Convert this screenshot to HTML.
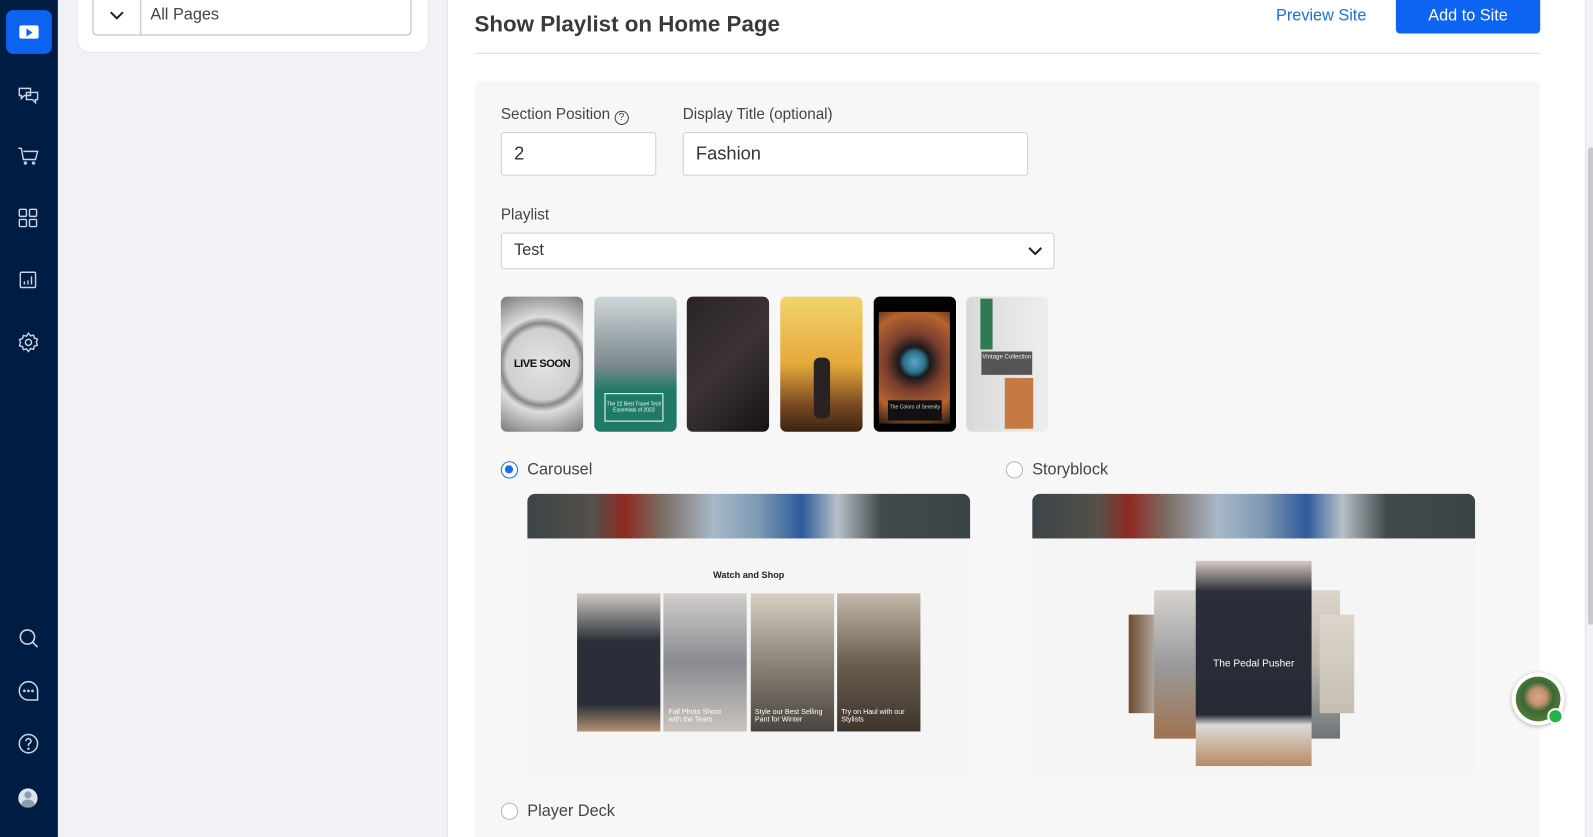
<!DOCTYPE html>
<html><head><meta charset="utf-8"><style>
*{box-sizing:border-box;margin:0;padding:0}
html,body{width:1593px;height:837px;overflow:hidden;background:#f0f2f5}
#w{position:absolute;left:0;top:0;width:1568px;height:824px;transform:scale(1.01594);transform-origin:0 0;font-family:"Liberation Sans",sans-serif;color:#333;overflow:hidden}
.side{position:absolute;left:0;top:0;width:57px;height:824px;background:#011c43}
.ic{position:absolute;left:17px;width:22px;height:22px}
.left{position:absolute;left:57px;top:0;width:384px;height:824px;background:#f0f2f5;border-right:1px solid #e3e5e8}
.card{position:absolute;left:76px;top:-10px;width:346px;height:62px;background:#fff;border-radius:12px;border:1px solid #e6e8eb}
.sel{position:absolute;left:91px;top:-5px;width:314px;height:40px;border:1px solid #b8b8b8;border-radius:0 0 4px 4px;background:#fff}
.main{position:absolute;left:441px;top:0;width:1119px;height:824px;background:#fff}
.scroll{position:absolute;left:1560px;top:0;width:8px;height:824px;background:#f0f2f5;border-left:1px solid #e5e5e5}
.abs{position:absolute}
.inp{position:absolute;background:#fff;border:1px solid #cfcfcf;border-radius:3px;font-size:18px;color:#333;padding-left:12px;display:flex;align-items:center}
.lbl{position:absolute;font-size:15px;color:#444}
.th{position:absolute;top:292px;width:81px;height:133px;border-radius:6px;overflow:hidden}
.radio{position:absolute;width:17px;height:17px;border-radius:50%;border:1px solid #b5b5b5;background:#fff}
</style></head><body><div id="w">
<div class="side">
<div class="abs" style="left:6px;top:10px;width:45px;height:43px;background:#0b63f0;border-radius:7px"></div>
<div class="abs" style="left:19px;top:25px;width:19px;height:13px;background:#fff;border-radius:2px"></div>
<div class="abs" style="left:26px;top:28px;width:0;height:0;border-left:6px solid #0b63f0;border-top:4px solid transparent;border-bottom:4px solid transparent"></div>
<svg class="ic" style="top:82px" viewBox="0 0 22 22" fill="none" stroke="#c9d3e3" stroke-width="1.4"><path d="M2 5h11v7H7l-3 3v-3H2z"/><path d="M9 9h11v7h-2v3l-3-3H9z"/></svg>
<svg class="ic" style="top:143px" viewBox="0 0 22 22" fill="none" stroke="#c9d3e3" stroke-width="1.4"><path d="M1 3h3l2 11h12l2-8H6"/><circle cx="8" cy="17.5" r="1"/><circle cx="16" cy="17.5" r="1"/></svg>
<svg class="ic" style="top:204px" viewBox="0 0 22 22" fill="none" stroke="#c9d3e3" stroke-width="1.4"><rect x="2" y="2" width="7" height="7" rx="1"/><rect x="12" y="2" width="7" height="7" rx="1"/><rect x="2" y="12" width="7" height="7" rx="1"/><rect x="12" y="12" width="7" height="7" rx="1"/></svg>
<svg class="ic" style="top:265px" viewBox="0 0 22 22" fill="none" stroke="#c9d3e3" stroke-width="1.4"><rect x="3" y="3" width="15" height="15" rx="1"/><path d="M7 15v-3M10.5 15v-4M14 15V7"/></svg>
<svg class="ic" style="top:326px" viewBox="0 0 22 22" fill="none" stroke="#c9d3e3" stroke-width="1.4"><circle cx="11" cy="11" r="3"/><path d="M11 2l2 2.5 3-.7.8 3 3 1-1 3 1 3-3 1-.8 3-3-.7L11 20l-2-2.5-3 .7-.8-3-3-1 1-3-1-3 3-1 .8-3 3 .7z"/></svg>
<svg class="ic" style="top:617px" viewBox="0 0 22 22" fill="none" stroke="#c9d3e3" stroke-width="1.6"><circle cx="10" cy="10" r="7"/><path d="M15 15l5 5"/></svg>
<svg class="ic" style="top:669px" viewBox="0 0 22 22" fill="none" stroke="#c9d3e3" stroke-width="1.5"><path d="M11 2a9 9 0 1 0 0 18h9v-9a9 9 0 0 0-9-9z"/><circle cx="7" cy="11" r=".6"/><circle cx="11" cy="11" r=".6"/><circle cx="15" cy="11" r=".6"/></svg>
<svg class="ic" style="top:721px" viewBox="0 0 22 22" fill="none" stroke="#c9d3e3" stroke-width="1.5"><circle cx="11" cy="11" r="9"/><path d="M8.5 8.5a2.5 2.5 0 1 1 3.5 2.3c-.7.3-1 .8-1 1.5v1"/><circle cx="11" cy="16" r=".5"/></svg>
<div class="abs" style="left:18px;top:776px;width:19px;height:19px;border-radius:50%;background:#dde3ec;overflow:hidden"><div class="abs" style="left:6px;top:3px;width:7px;height:7px;border-radius:50%;background:#8d9bb0"></div><div class="abs" style="left:3px;top:11px;width:13px;height:10px;border-radius:50%;background:#8d9bb0"></div></div>
</div>
<div class="left"></div>
<div class="card"></div>
<div class="sel"><div class="abs" style="left:46px;top:0;width:1px;height:39px;background:#b8b8b8"></div>
<svg class="abs" style="left:15px;top:13px" width="16" height="12" viewBox="0 0 16 12" fill="none" stroke="#222" stroke-width="2"><path d="M2 3l6 6 6-6"/></svg>
<div class="abs" style="left:56px;top:10px;font-size:16px;color:#444">All Pages</div></div>
<div class="main"></div>
<div class="scroll"><div class="abs" style="left:2px;top:145px;width:6px;height:470px;border-radius:3px;background:#c8cacd"></div></div>
<div class="abs" style="left:467px;top:11px;font-size:22px;font-weight:bold;color:#3a3a3a">Show Playlist on Home Page</div>
<div class="abs" style="left:1256px;top:7px;font-size:16px;color:#1a6ef0">Preview Site</div>
<div class="abs" style="left:1374px;top:-5px;width:142px;height:38px;background:#0d63f2;border-radius:4px;color:#fff;font-size:16px;text-align:center;line-height:42px">Add to Site</div>
<div class="abs" style="left:467px;top:52px;width:1049px;height:1px;background:#dcdcdc"></div>
<div class="abs" style="left:467px;top:80px;width:1049px;height:770px;background:#f7f7f7;border-radius:6px"></div>
<div class="lbl" style="left:493px;top:104px">Section Position <span style="display:inline-block;width:14px;height:14px;border:1.3px solid #444;border-radius:50%;font-size:10px;text-align:center;line-height:12px;vertical-align:-1px">?</span></div>
<div class="lbl" style="left:672px;top:104px">Display Title (optional)</div>
<div class="inp" style="left:493px;top:130px;width:153px;height:43px">2</div>
<div class="inp" style="left:672px;top:130px;width:340px;height:43px">Fashion</div>
<div class="lbl" style="left:493px;top:203px">Playlist</div>
<div class="inp" style="left:493px;top:229px;width:545px;height:36px;font-size:16px">Test
<svg class="abs" style="right:10px;top:11px" width="16" height="12" viewBox="0 0 16 12" fill="none" stroke="#222" stroke-width="2"><path d="M2 3l6 6 6-6"/></svg></div>
<div class="th" style="left:493px;background:radial-gradient(circle at 50% 50%,#e4e4e4 0,#cfcfcf 45%,#888 52%,#ddd 60%,#777 100%)"><div class="abs" style="left:0;width:81px;top:60px;text-align:center;font-size:11px;font-weight:bold;color:#111;letter-spacing:-.5px">LIVE SOON</div></div>
<div class="th" style="left:585px;background:linear-gradient(#cfd6d8,#7d8a90 50%,#1f7a66 70%,#1f7a66)"><div class="abs" style="left:10px;top:95px;width:58px;height:28px;background:#1f7a66;border:1px solid #fff;color:#fff;font-size:5px;text-align:center;padding-top:7px">The 22 Best Travel Tech Essentials of 2023</div></div>
<div class="th" style="left:676px;background:linear-gradient(135deg,#2a2424,#3c3434 50%,#151212)"></div>
<div class="th" style="left:768px;background:linear-gradient(#f1d36d,#e5a83a 50%,#7a4a22 80%,#3a2410)"><div class="abs" style="left:33px;top:60px;width:16px;height:60px;background:#2a2222;border-radius:6px"></div></div>
<div class="th" style="left:860px;background:#000"><div class="abs" style="left:5px;top:15px;width:70px;height:110px;background:radial-gradient(circle at 50% 45%,#5aa9c8 0,#2d6f8a 15%,#1a1a1a 22%,#7a3e2e 40%,#b5642e 70%,#2a1a14)"></div><div class="abs" style="left:14px;top:102px;width:53px;height:20px;background:#111;color:#ddd;font-size:5px;text-align:center;padding-top:4px">The Colors of Serenity</div></div>
<div class="th" style="left:951px;background:linear-gradient(90deg,#d9d9d9,#eee)"><div class="abs" style="left:14px;top:2px;width:12px;height:50px;background:#2f7a55"></div><div class="abs" style="left:15px;top:54px;width:50px;height:23px;background:#555;color:#eee;font-size:6px;text-align:center;padding-top:3px">Vintage Collection</div><div class="abs" style="left:38px;top:80px;width:28px;height:50px;background:#c47a42"></div></div>
<div class="radio" style="left:493px;top:454px;border:1.5px solid #1a6ef0"><div class="abs" style="left:3px;top:3px;width:8px;height:8px;border-radius:50%;background:#1a6ef0"></div></div>
<div class="abs" style="left:519px;top:454px;font-size:16px;color:#444">Carousel</div>
<div class="radio" style="left:990px;top:454px"></div>
<div class="abs" style="left:1016px;top:454px;font-size:16px;color:#444">Storyblock</div>
<div class="radio" style="left:493px;top:790px"></div>
<div class="abs" style="left:519px;top:790px;font-size:16px;color:#444">Player Deck</div>
<div class="abs" style="left:519px;top:486px;width:436px;height:282px;background:#f5f5f5;border-radius:8px;overflow:hidden">
<div class="abs" style="left:0;top:0;width:436px;height:44px;background:linear-gradient(90deg,#3b4447 0,#55504a 15%,#8e2a22 22%,#7a6a60 30%,#a7b8c8 42%,#7f9ab3 52%,#2d5a9a 62%,#b8c0c8 70%,#404a4a 80%,#3a4445)"></div>
<div class="abs" style="left:0;top:75px;width:436px;text-align:center;font-size:9px;font-weight:bold;color:#222">Watch and Shop</div>
<div class="abs" style="left:49px;top:98px;width:82px;height:136px;background:linear-gradient(#cfc9c2,#2a2e38 35%,#2a2e38 80%,#b49070)"></div>
<div class="abs" style="left:134px;top:98px;width:82px;height:136px;background:linear-gradient(#d2cfcc,#888a90 50%,#c9c4bf)"></div>
<div class="abs" style="left:220px;top:98px;width:82px;height:136px;background:linear-gradient(#d9d0c2,#8c8478 50%,#4a4440)"></div>
<div class="abs" style="left:305px;top:98px;width:82px;height:136px;background:linear-gradient(#c4b9aa,#6b5f50 50%,#3d342c)"></div>
<div class="abs" style="left:139px;top:212px;font-size:7px;color:#fff">Fall Photo Shoot<br>with the Team</div>
<div class="abs" style="left:224px;top:212px;font-size:7px;color:#fff">Style our Best Selling<br>Pant for Winter</div>
<div class="abs" style="left:309px;top:212px;font-size:7px;color:#fff">Try on Haul with our<br>Stylists</div>
</div>
<div class="abs" style="left:1016px;top:486px;width:436px;height:282px;background:#f5f5f5;border-radius:8px;overflow:hidden">
<div class="abs" style="left:0;top:0;width:436px;height:44px;background:linear-gradient(90deg,#3b4447 0,#55504a 15%,#8e2a22 22%,#7a6a60 30%,#a7b8c8 42%,#7f9ab3 52%,#2d5a9a 62%,#b8c0c8 70%,#404a4a 80%,#3a4445)"></div>
<div class="abs" style="left:95px;top:119px;width:34px;height:97px;background:linear-gradient(90deg,#6b4a30,#c8c4c0)"></div>
<div class="abs" style="left:120px;top:95px;width:45px;height:146px;background:linear-gradient(#d6d3d0,#9a9a9c 50%,#a07250)"></div>
<div class="abs" style="left:258px;top:95px;width:45px;height:146px;background:linear-gradient(#dcd6cc,#bdb6ac 50%,#6c7478)"></div>
<div class="abs" style="left:283px;top:119px;width:34px;height:97px;background:linear-gradient(#ddd6cc,#c6beb2)"></div>
<div class="abs" style="left:161px;top:66px;width:114px;height:202px;background:linear-gradient(#d8cbc2 0,#2b2f3a 15%,#262a34 75%,#dcdad8 80%,#b78c62)"></div>
<div class="abs" style="left:161px;top:162px;width:114px;text-align:center;font-size:10px;color:#fff">The Pedal Pusher</div>
</div>
<div class="abs" style="left:1488px;top:662px;width:52px;height:52px;border-radius:50%;background:#fff;box-shadow:0 1px 4px rgba(0,0,0,.3)"><div class="abs" style="left:4px;top:4px;width:44px;height:44px;border-radius:50%;background:radial-gradient(circle at 50% 45%,#d6a88a 0,#c49070 25%,#3a6a32 45%,#6a8a40)"></div><div class="abs" style="left:35px;top:35px;width:16px;height:16px;border-radius:50%;background:#22b34a;border:2px solid #fff"></div></div>
</div></body></html>
